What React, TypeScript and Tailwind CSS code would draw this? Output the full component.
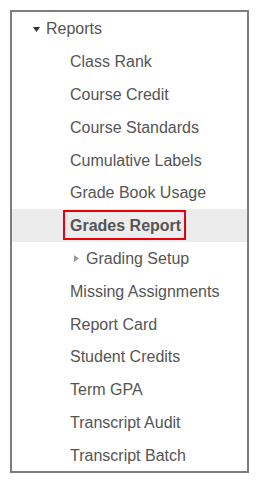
import React from "react";

const items = [
  "Class Rank",
  "Course Credit",
  "Course Standards",
  "Cumulative Labels",
  "Grade Book Usage",
  "__grades",
  "__grading",
  "Missing Assignments",
  "Report Card",
  "Student Credits",
  "Term GPA",
  "Transcript Audit",
  "Transcript Batch",
];

export default function App() {
  return (
    <div className="w-[260px] h-[482px] bg-white pt-[10px] pl-[10px]" style={{ fontFamily: '"Liberation Sans", Arial, sans-serif' }}>
      <div className="w-[239px] h-[463px] border-2 border-[#7d7d7d] flex flex-col text-[16px] text-[#555555]">
        <div className="h-[32.8px] flex items-center pt-[2px] pl-[21px] shrink-0">
          <svg width="7" height="5" viewBox="0 0 7 5" className="mr-[6px]">
            <polygon points="0,0 7,0 3.5,5" fill="#333333" />
          </svg>
          <span>Reports</span>
        </div>
        {items.map((it) => {
          if (it === "__grades") {
            return (
              <div key={it} className="h-[32.8px] flex items-center bg-[#ececec] pl-[51px] shrink-0">
                <span className="border-2 border-[#e8000b] h-[30px] flex items-center pt-[1px] pl-[5px] pr-[3px] font-bold text-[#555555]">
                  Grades Report
                </span>
              </div>
            );
          }
          if (it === "__grading") {
            return (
              <div key={it} className="h-[32.8px] flex items-center pt-[2px] pl-[61px] shrink-0">
                <svg width="7" height="7" viewBox="0 0 7 7" className="mr-[6px]">
                  <polygon points="1,0 6,3.5 1,7" fill="#9a9a9a" />
                </svg>
                <span>Grading Setup</span>
              </div>
            );
          }
          return (
            <div key={it} className="h-[32.8px] flex items-center pt-[2px] pl-[58px] shrink-0">
              {it}
            </div>
          );
        })}
      </div>
    </div>
  );
}
